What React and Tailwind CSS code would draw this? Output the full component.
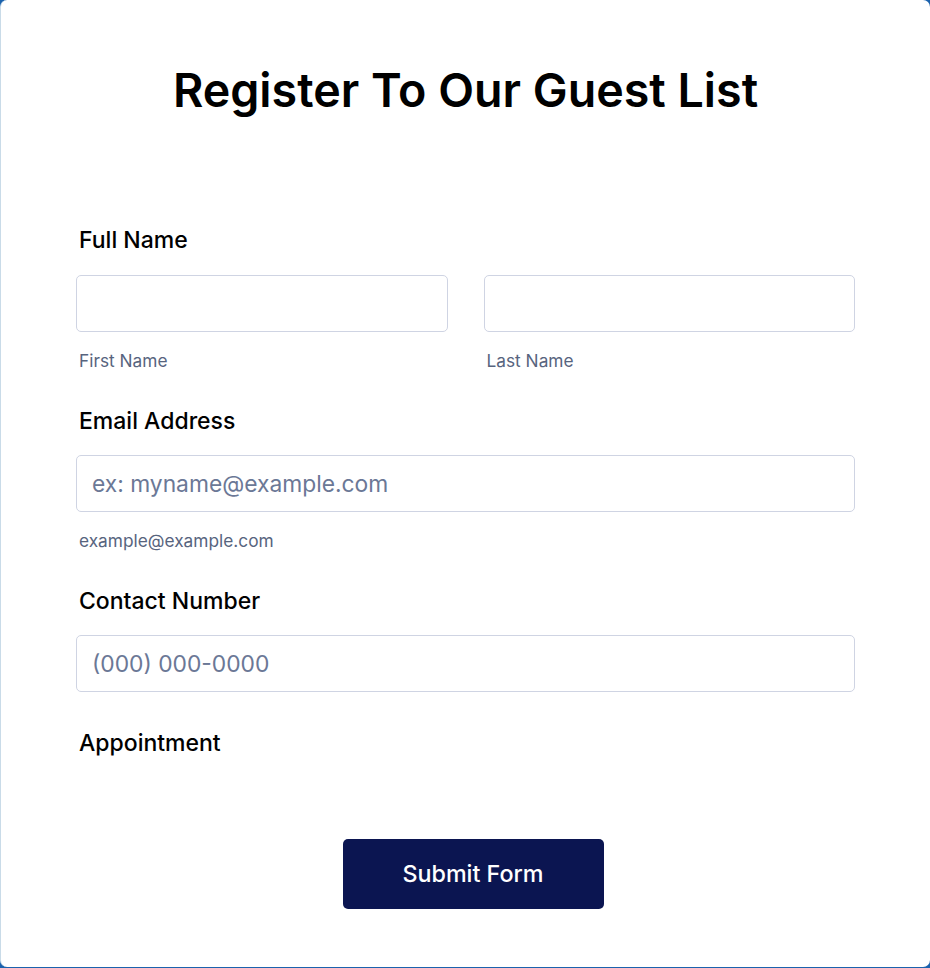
import React from "react";

const font = { fontFamily: "Inter, 'Noto Sans', sans-serif" };

function Label({ children, className = "" }) {
  return (
    <div className={`text-[23px] leading-[28px] font-medium text-black ${className}`}>{children}</div>
  );
}

function Sub({ children, className = "" }) {
  return <div className={`text-[17.3px] leading-[24px] text-[#57647e] ${className}`}>{children}</div>;
}

function Input({ placeholder = "", className = "" }) {
  return (
    <input
      placeholder={placeholder}
      className={`block h-[57px] w-full rounded-[5px] border border-[#cfd4e3] bg-white px-[15px] text-[22.8px] text-black outline-none placeholder:text-[#6b7896] ${className}`}
    />
  );
}

export default function App() {
  return (
    <div className="h-[968px] w-[930px] bg-[#1b62ad]" style={font}>
      <div className="flex h-[967px] w-[930px] flex-col items-center rounded-[7px] border-l border-[#c9dbe8] bg-white">
        <h1 className="mt-[62px] text-[46.6px] leading-[56px] font-semibold text-black">Register To Our Guest List</h1>
        <div className="mt-[108px] flex w-[779px] flex-col">
          <Label className="pl-[3px]">Full Name</Label>
          <div className="mt-[21px] grid grid-cols-2 gap-[36px]">
            <div>
              <Input />
              <Sub className="mt-[17px] pl-[3px]">First Name</Sub>
            </div>
            <div>
              <Input />
              <Sub className="mt-[17px] pl-[3px]">Last Name</Sub>
            </div>
          </div>
          <Label className="mt-[34px] pl-[3px]">Email Address</Label>
          <Input className="mt-[20px]" placeholder="ex: myname@example.com" />
          <Sub className="mt-[17px] pl-[3px]">example@example.com</Sub>
          <Label className="mt-[34px] pl-[3px]">Contact Number</Label>
          <Input className="mt-[20px]" placeholder="(000) 000-0000" />
          <Label className="mt-[37px] pl-[3px]">Appointment</Label>
        </div>
        <button className="ml-[15px] mt-[82px] h-[70px] w-[261px] rounded-[5px] bg-[#0b1551] text-[23.3px] font-medium text-white">
          Submit Form
        </button>
      </div>
    </div>
  );
}
